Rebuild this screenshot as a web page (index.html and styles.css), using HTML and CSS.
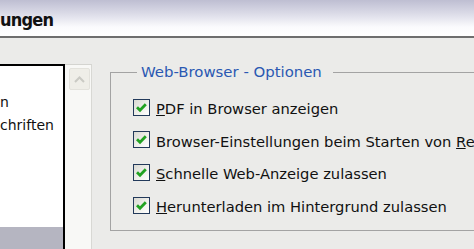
FILE: index.html
```html
<!DOCTYPE html>
<html lang="de">
<head>
<meta charset="utf-8">
<title>Voreinstellungen</title>
<link rel="stylesheet" href="styles.css">
</head>
<body>
<header class="titlebar"><h1 class="title">ungen</h1></header>
<main class="content">
  <div class="listpane">
    <ul class="list">
      <li>n</li>
      <li>chriften</li>
    </ul>
    <div class="hscroll"></div>
  </div>
  <div class="vscroll">
    <div class="scroll-btn">
      <svg width="11" height="7" viewBox="0 0 11 7"><path d="M1 6 L5.5 1.5 L10 6" fill="none" stroke="#cacac4" stroke-width="2"/></svg>
    </div>
  </div>
  <fieldset class="group">
    <legend class="group-title">Web-Browser - Optionen</legend>
    <label class="opt"><span class="cb"><svg width="15" height="15" viewBox="0 0 15 15"><path d="M3 7.2 L6 10.2 L11.8 4.2" fill="none" stroke="#22a222" stroke-width="2.8"/></svg></span><span class="txt"><u>P</u>DF in Browser anzeigen</span></label>
    <label class="opt"><span class="cb"><svg width="15" height="15" viewBox="0 0 15 15"><path d="M3 7.2 L6 10.2 L11.8 4.2" fill="none" stroke="#22a222" stroke-width="2.8"/></svg></span><span class="txt">Browser-Einstellungen beim Starten von <u>R</u>e</span></label>
    <label class="opt"><span class="cb"><svg width="15" height="15" viewBox="0 0 15 15"><path d="M3 7.2 L6 10.2 L11.8 4.2" fill="none" stroke="#22a222" stroke-width="2.8"/></svg></span><span class="txt"><u>S</u>chnelle Web-Anzeige zulassen</span></label>
    <label class="opt"><span class="cb"><svg width="15" height="15" viewBox="0 0 15 15"><path d="M3 7.2 L6 10.2 L11.8 4.2" fill="none" stroke="#22a222" stroke-width="2.8"/></svg></span><span class="txt"><u>H</u>erunterladen im Hintergrund zulassen</span></label>
  </fieldset>
</main>
</body>
</html>
```
FILE: styles.css
```css
html, body {
  margin: 0;
  padding: 0;
}
body {
  width: 474px;
  height: 249px;
  overflow: hidden;
  background: #ebebe9;
  font-family: "DejaVu Sans", "Noto Sans", sans-serif;
  color: #111;
}
.titlebar {
  height: 36px;
  border-bottom: 2px solid #6e6e6e;
  background: linear-gradient(#bebed2 0, #dcdce8 14px, #fbfbfd 27px, #ffffff 36px);
}
.title {
  margin: 0;
  padding-top: 8px;
  font-family: "DejaVu Sans Condensed", "DejaVu Sans", sans-serif;
  font-weight: bold;
  font-size: 18px;
  line-height: 24px;
  letter-spacing: -0.8px;
  color: #111;
}
.content {
  display: flex;
  align-items: flex-start;
  height: 211px;
}
.listpane {
  flex: none;
  width: 63px;
  height: 183px;
  margin-top: 26px;
  border-top: 2px solid #000;
  border-right: 2px solid #000;
  background: #fff;
  display: flex;
  flex-direction: column;
}
.list {
  flex: 1;
  margin: 0;
  padding: 25px 0 0;
  list-style: none;
  font-size: 14px;
  line-height: 23px;
  color: #111;
}
.hscroll {
  height: 22px;
  background: #b5b5c1;
}
.vscroll {
  flex: none;
  box-sizing: border-box;
  width: 27px;
  height: 185px;
  margin-top: 26px;
  padding: 3px 0 0 4px;
  border-top: 1px solid #d4d4d0;
  border-right: 1px solid #d8d8d4;
  background: #f8f8f6;
}
.scroll-btn {
  box-sizing: border-box;
  width: 21px;
  height: 22px;
  border: 1px solid #e3e2dc;
  border-radius: 2px;
  background: #efeee8;
  display: flex;
  align-items: center;
  justify-content: center;
}
.group {
  flex: none;
  width: 420px;
  min-width: 0;
  margin: 25px 0 0 18px;
  padding: 10px 0 9px 22px;
  border: 1px solid #a3a3a3;
}
.group-title {
  margin-left: 4px;
  padding: 0 11px 0 4px;
  font-size: 14.9px;
  line-height: 18px;
  color: #2a58b2;
}
.opt {
  display: flex;
  align-items: center;
  height: 32.6px;
  white-space: nowrap;
  font-size: 14.7px;
  color: #111;
}
.cb {
  flex: none;
  box-sizing: border-box;
  width: 17px;
  height: 17px;
  margin-right: 6px;
  border: 1px solid #22395a;
  background: linear-gradient(135deg, #d9d9d3 0%, #f2f2ee 60%, #ffffff 100%);
  display: flex;
}
.txt {
  padding-top: 3px;
}
```
